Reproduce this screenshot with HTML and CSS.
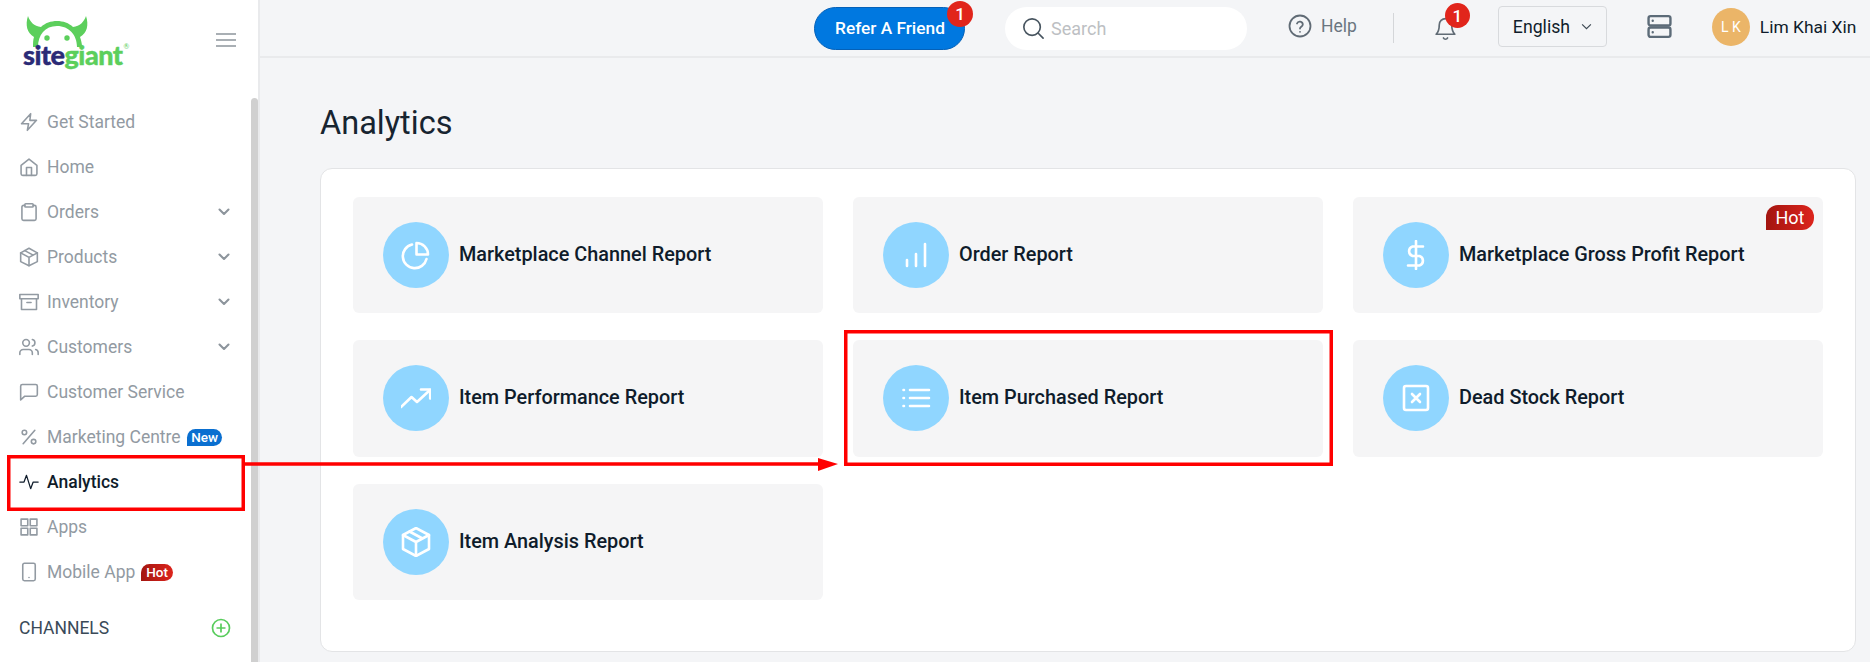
FILE: index.html
```html
<!DOCTYPE html>
<html lang="en">
<head>
<meta charset="utf-8">
<title>Analytics</title>
<link rel="stylesheet" href="styles.css">
</head>
<body>
<div class="app">
  <aside class="sidebar">
    <div class="brand">
      <svg class="logo" width="70" height="40" viewBox="0 0 70 40">
        <path d="M4 3 C6 9 10 13 17 14 C21 10 27 8 33 8 C39 8 45 10 49 14 C56 13 60 9 62 3 C65 12 63 20 56 24 C57 27 58 30 58 34 L53 34 C53 22 45 13 33 13 C21 13 14 22 14 34 L9 34 C9 30 9 27 10 24 C3 20 1 12 4 3Z" fill="#5ccf5c"/>
        <circle cx="23" cy="25" r="2.700" fill="#5ccf5c"/><circle cx="43" cy="25" r="2.700" fill="#5ccf5c"/>
      </svg>
      <span class="logo-word"><span class="logo-site">site</span><span class="logo-giant">giant</span><sup class="logo-r">®</sup></span>
      <svg class="burger" width="20" height="14" viewBox="0 0 20 14"><path d="M0 1h20M0 7h20M0 13h20" stroke="#8d959c" stroke-width="1.600"/></svg>
    </div>
    <div class="scrollbar"></div>
    <nav class="nav">
      <a class="nav-item"><svg class="ni" viewBox="0 0 24 24"><path d="M14 2 3 14h8.500L10 22l11-12h-8z"/></svg><span>Get Started</span></a>
      <a class="nav-item"><svg class="ni" viewBox="0 0 24 24"><path d="M2.500 10 12 2.500l9.500 7.500v10a2 2 0 0 1-2 2h-15a2 2 0 0 1-2-2z"/><path d="M9 22V12.500h6V22"/></svg><span>Home</span></a>
      <a class="nav-item"><svg class="ni" viewBox="0 0 24 24"><path d="M7 4H5.500a2 2 0 0 0-2 2v14a2 2 0 0 0 2 2h13a2 2 0 0 0 2-2V6a2 2 0 0 0-2-2H17"/><rect x="7" y="2" width="10" height="4" rx="1"/></svg><span>Orders</span><svg class="chev" viewBox="0 0 12 8"><path d="M1.500 1.500 6 6l4.500-4.500"/></svg></a>
      <a class="nav-item"><svg class="ni" viewBox="0 0 24 24"><path d="M12 1.500 2 7v10.500l10 5 10-5V7z"/><path d="M2 7l10 5.500L22 7M12 12.500V22.500M7 4.300l10 5.500"/></svg><span>Products</span><svg class="chev" viewBox="0 0 12 8"><path d="M1.500 1.500 6 6l4.500-4.500"/></svg></a>
      <a class="nav-item"><svg class="ni" viewBox="0 0 24 24"><rect x="1" y="3" width="22" height="5"/><path d="M3 8v13h18V8M9.500 12.500h5"/></svg><span>Inventory</span><svg class="chev" viewBox="0 0 12 8"><path d="M1.500 1.500 6 6l4.500-4.500"/></svg></a>
      <a class="nav-item"><svg class="ni" viewBox="0 0 24 24"><path d="M16 21v-2a4 4 0 0 0-4-4H5a4 4 0 0 0-4 4v2"/><circle cx="8.500" cy="7" r="4"/><path d="M23 21v-2a4 4 0 0 0-3-3.900M16 3.100a4 4 0 0 1 0 7.800"/></svg><span>Customers</span><svg class="chev" viewBox="0 0 12 8"><path d="M1.500 1.500 6 6l4.500-4.500"/></svg></a>
      <a class="nav-item"><svg class="ni" viewBox="0 0 24 24"><path d="M22 15a2 2 0 0 1-2 2H7l-5 4.500V5a2 2 0 0 1 2-2h16a2 2 0 0 1 2 2z"/></svg><span>Customer Service</span></a>
      <a class="nav-item"><svg class="ni" viewBox="0 0 24 24"><path d="M19 4 5 20"/><circle cx="6.500" cy="6.500" r="2.700"/><circle cx="17.500" cy="17.500" r="2.700"/></svg><span>Marketing Centre</span><b class="tag tag-new">New</b></a>
      <a class="nav-item active"><svg class="ni" viewBox="0 0 24 24"><path d="M1 12h5l3-8 5 16 3-8h6"/></svg><span>Analytics</span></a>
      <a class="nav-item"><svg class="ni" viewBox="0 0 24 24"><rect x="2.500" y="2.500" width="8" height="8"/><rect x="13.500" y="2.500" width="8" height="8"/><rect x="2.500" y="13.500" width="8" height="8"/><rect x="13.500" y="13.500" width="8" height="8"/></svg><span>Apps</span></a>
      <a class="nav-item"><svg class="ni" viewBox="0 0 24 24"><rect x="4.500" y="1.500" width="15" height="21" rx="2"/><path d="M12 18.500h.01"/></svg><span>Mobile App</span><b class="tag tag-hot">Hot</b></a>
    </nav>
    <div class="channels"><span>CHANNELS</span><svg class="plus" viewBox="0 0 20 20"><circle cx="10" cy="10" r="8.500"/><path d="M10 5.500v9M5.500 10h9"/></svg></div>
  </aside>
  <div class="main">
    <header class="topbar">
      <div class="refer"><span>Refer A Friend</span><b class="dot dot-refer">1</b></div>
      <div class="search">
        <svg class="search-ico" viewBox="0 0 24 24"><circle cx="11" cy="11" r="9"/><path d="m18 18 5 5"/></svg>
        <span>Search</span>
      </div>
      <div class="help"><svg class="help-ico" viewBox="0 0 24 24"><circle cx="12" cy="12" r="10.500"/><path d="M9 9.500a3 3 0 0 1 5.800 1c0 2-2.800 2.500-2.800 4"/><path d="M12 17.800h.01"/></svg><span>Help</span></div>
      <div class="vr"></div>
      <div class="bell"><svg class="bell-ico" viewBox="0 0 24 24"><path d="M18 9a6 6 0 0 0-12 0c0 6-3 9-3 9h18s-3-3-3-9M10 21.500a2.200 2.200 0 0 0 4 0"/></svg><b class="dot dot-bell">1</b></div>
      <div class="lang"><span>English</span><svg class="lang-chev" viewBox="0 0 12 8"><path d="M1 1.500 6 6.500l5-5"/></svg></div>
      <svg class="server" viewBox="0 0 24 24"><rect x="1.500" y="2" width="21" height="9" rx="2"/><rect x="1.500" y="13" width="21" height="9" rx="2"/><path d="M5.500 6.500h.01M5.500 17.500h.01"/></svg>
      <div class="user"><div class="avatar">L K</div><span>Lim Khai Xin</span></div>
    </header>
    <main class="content">
      <h1 class="title">Analytics</h1>
      <section class="panel">
        <a class="card"><span class="circle"><svg viewBox="0 0 30 30"><path d="M25.500 19A12 12 0 1 1 11 4.500"/><path d="M15.500 3a11.500 11.500 0 0 1 11.500 11.500H15.500z"/></svg></span><span class="card-text">Marketplace Channel Report</span></a>
        <a class="card"><span class="circle"><svg viewBox="0 0 30 30"><path d="M6 26v-6M15 26V14M24 26V4"/></svg></span><span class="card-text">Order Report</span></a>
        <a class="card"><span class="circle"><svg viewBox="0 0 30 30"><path d="M15 1v28M22 6.500H11.500a5 5 0 0 0 0 9.500h7a5 5 0 0 1 0 9.500H7"/></svg></span><span class="card-text">Marketplace Gross Profit Report</span><b class="hot">Hot</b></a>
        <a class="card"><span class="circle"><svg viewBox="0 0 30 30"><path d="M0 24 10.500 14l5.500 5L29 7"/><path d="M20 6.500h9.200v9"/></svg></span><span class="card-text">Item Performance Report</span></a>
        <a class="card"><span class="circle"><svg viewBox="0 0 30 30"><path d="M9 7h19M9 15h19M9 23h19M2.500 7h.5M2.500 15h.5M2.500 23h.5"/></svg></span><span class="card-text">Item Purchased Report</span></a>
        <a class="card"><span class="circle"><svg viewBox="0 0 30 30"><rect x="3" y="3" width="24" height="24" rx="2"/><path d="m11 11 8 8M19 11l-8 8"/></svg></span><span class="card-text">Dead Stock Report</span></a>
        <a class="card"><span class="circle"><svg viewBox="0 0 30 30"><path d="M15 1 2 8v14l13 7 13-7V8z"/><path d="M2 8l13 7 13-7M15 15v14M8.500 4.500l13 7"/></svg></span><span class="card-text">Item Analysis Report</span></a>
      </section>
    </main>
  </div>
</div>
<svg class="annot" width="1870" height="662" viewBox="0 0 1870 662">
  <rect x="8.750" y="456.750" width="234.500" height="52.500"/>
  <rect x="845.750" y="331.750" width="485.500" height="132.500"/>
  <path d="M245 464H825"/>
  <path class="head" d="M818 458 838 464 818 471z"/>
</svg>
</body>
</html>
```

FILE: styles.css
```css
* { box-sizing: border-box; }
html, body { margin: 0; height: 100%; overflow: hidden; }
body { font-family: Roboto, "Liberation Sans", sans-serif; background: #f4f5f7; color: #0f1c2b; }
.app { display: flex; height: 662px; }

.sidebar { position: relative; width: 260px; flex: none; background: #fff; border-right: 2px solid #e9eaec; overflow: hidden; }
.brand { position: relative; height: 99.600px; }
.logo { position: absolute; left: 24px; top: 13px; }
.logo-word { position: absolute; left: 23px; top: 41px; font: 900 27px/28px Lato, "Noto Sans", sans-serif; letter-spacing: -0.5px; display: flex; -webkit-text-stroke: 0.4px currentColor; }
.logo-site { color: #2b2a76; }
.logo-giant { color: #5ccf5c; }
.logo-r { font-size: 7px; line-height: 10px; font-weight: 400; color: #5ccf5c; margin-left: 1px; -webkit-text-stroke: 0; }
.burger { position: absolute; left: 216px; top: 33px; }
.scrollbar { position: absolute; left: 251px; top: 98px; bottom: 0; width: 7px; background: #d0d0d0; border-radius: 4px 4px 0 0; }

.nav { display: flex; flex-direction: column; }
.nav-item { display: flex; align-items: center; height: 45px; padding-left: 19px; font-size: 17.500px; color: #929aa2; }
.nav-item.active { color: #0f1c2b; font-weight: 500; }
.nav-item.active .ni { stroke: #0f1c2b; stroke-width: 1.500; }
.ni { width: 20px; height: 20px; margin-right: 8px; flex: none; fill: none; stroke: #929aa2; stroke-width: 1.900; stroke-linecap: round; stroke-linejoin: round; }
.chev { width: 12px; height: 8px; margin-left: auto; margin-right: 28px; fill: none; stroke: #8d959c; stroke-width: 2.100; stroke-linecap: round; stroke-linejoin: round; }
.tag { margin-left: 6px; color: #fff; font-size: 13.500px; line-height: 17px; font-weight: 500; padding: 0 5px; border-radius: 9px 9px 9px 0; }
.tag-new { background: #0a6fd0; padding: 0 4.500px; }
.tag-hot { background: linear-gradient(90deg, #a31510, #dc241c); }
.channels { display: flex; align-items: center; height: 40px; margin-top: 13px; padding-left: 19px; font-size: 17.500px; color: #3a4a58; }
.plus { width: 20px; height: 20px; margin-left: auto; margin-right: 27px; fill: none; stroke: #58cc5c; stroke-width: 1.700; }

.main { flex: 1; min-width: 0; display: flex; flex-direction: column; }
.topbar { position: relative; height: 58px; flex: none; display: flex; align-items: center; border-bottom: 2px solid #e9eaec; }
.refer { position: relative; margin-left: 554px; width: 151px; height: 43px; border-radius: 22px; background: #0078e0; border: 1px solid #0561b8; color: #fff; font-size: 17.300px; font-weight: 500; display: flex; align-items: center; padding-left: 20px; }
.dot { position: absolute; display: flex; align-items: center; justify-content: center; width: 26px; height: 26px; border-radius: 50%; background: #e1251b; color: #fff; font-size: 17px; font-weight: 500; }
.dot-refer { top: -7px; right: -9px; }
.search { width: 242px; height: 43px; margin-left: 40px; border-radius: 22px; background: #fff; display: flex; align-items: center; padding-left: 17px; color: #bdbfc3; font-size: 18px; }
.search-ico { width: 22px; height: 22px; margin-right: 7px; fill: none; stroke: #47545f; stroke-width: 1.800; stroke-linecap: round; }
.help { display: flex; align-items: center; margin-left: 41px; margin-bottom: 4px; color: #6a7680; font-size: 17.500px; }
.help-ico { width: 24px; height: 24px; margin-right: 9px; fill: none; stroke: #606b75; stroke-width: 1.800; stroke-linecap: round; }
.vr { width: 1px; height: 30px; margin-left: 36px; background: #d4d6d9; }
.bell { position: relative; width: 25px; height: 26px; margin-left: 39px; }
.bell-ico { width: 25px; height: 26px; fill: none; stroke: #606b75; stroke-width: 1.600; stroke-linecap: round; stroke-linejoin: round; }
.dot-bell { top: -12px; left: 12px; width: 25px; height: 25px; }
.lang { width: 109px; height: 41px; margin-left: 40px; margin-bottom: 3px; border: 1px solid #d8dadd; border-radius: 4px; background: #f4f5f7; display: flex; align-items: center; padding-left: 14px; font-size: 17.700px; color: #0f1c2b; }
.lang-chev { width: 11px; height: 7px; margin-left: 11px; fill: none; stroke: #3c4852; stroke-width: 1.300; }
.server { width: 25px; height: 25px; margin-left: 40px; margin-bottom: 4px; fill: none; stroke: #5c6b78; stroke-width: 2.300; stroke-linecap: round; }
.user { display: flex; align-items: center; margin-left: 40px; margin-bottom: 3px; font-size: 17.400px; color: #0f1c2b; }
.avatar { width: 38px; height: 38px; border-radius: 50%; background: #ebb568; color: #fff; font-size: 14px; display: flex; align-items: center; justify-content: center; margin-right: 10px; }

.content { flex: 1; padding: 0 14px 10px 60px; display: flex; flex-direction: column; min-height: 0; }
.title { margin: 43px 0 0; font-size: 32.500px; line-height: 44px; font-weight: 400; color: #172430; }
.panel { margin-top: 23px; height: 484px; flex: none; background: #fff; border: 1px solid #e3e4e6; border-radius: 12px; padding: 28px 32px 0 32px; display: grid; grid-template-columns: repeat(3, 470px); grid-auto-rows: 116.400px; column-gap: 30px; row-gap: 26.900px; align-content: start; }
.card { position: relative; background: #f5f5f6; border-radius: 6px; display: flex; align-items: center; padding-left: 30px; }
.circle { width: 66px; height: 66px; border-radius: 50%; background: #90d6ff; display: flex; align-items: center; justify-content: center; flex: none; margin-right: 10px; }
.circle svg { width: 30px; height: 30px; fill: none; stroke: #fff; stroke-width: 2.600; stroke-linecap: round; stroke-linejoin: round; }
.card-text { font-size: 19.850px; font-weight: 500; color: #0f1c2b; position: relative; top: -0.500px; }
.hot { position: absolute; top: 8px; right: 9px; width: 48px; height: 25px; background: linear-gradient(90deg, #a31510, #dc241c); color: #fff; border-radius: 12px 12px 12px 0; font-size: 18px; font-weight: 400; display: flex; align-items: center; justify-content: center; }

.annot { position: absolute; left: 0; top: 0; pointer-events: none; fill: none; stroke: #ff0000; stroke-width: 3.500; }
.annot .head { fill: #ff0000; stroke: none; }
```
